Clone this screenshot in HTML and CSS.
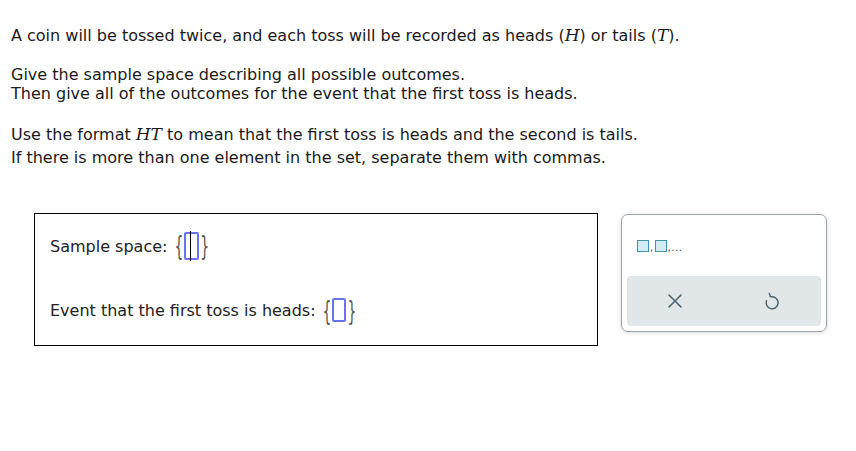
FILE: index.html
```html
<!DOCTYPE html>
<html>
<head>
<meta charset="utf-8">
<link rel="stylesheet" href="styles.css">
</head>
<body>
<div class="page">
  <p class="p1">A coin will be tossed twice, and each toss will be recorded as heads (<span class="m">H</span>) or tails (<span class="m">T</span>).</p>
  <p class="p2">Give the sample space describing all possible outcomes.<br>Then give all of the outcomes for the event that the first toss is heads.</p>
  <p class="p3"><span class="l1">Use the format <span class="m">HT</span> to mean that the first toss is heads and the second is tails.</span><br>If there is more than one element in the set, separate them with commas.</p>

  <div class="work">
    <div class="answer">
      <div class="row r1">
        <span>Sample space:</span>
        <span class="set"><span class="br">{</span><span class="slot active"><span class="caret"></span></span><span class="br">}</span></span>
      </div>
      <div class="row r2">
        <span>Event that the first toss is heads:</span>
        <span class="set"><span class="br">{</span><span class="slot"></span><span class="br">}</span></span>
      </div>
    </div>
    <div class="tools">
      <div class="tool-top">
        <span class="seq"><span class="sq"></span><span class="cm">,</span><span class="sq"></span><span class="cm">,...</span></span>
      </div>
      <div class="tool-bar">
        <svg class="ic" width="16" height="16" viewBox="0 0 16 16"><path d="M2 2 L14 14 M14 2 L2 14" stroke="#4c6470" stroke-width="1.6" fill="none" stroke-linecap="round"/></svg>
        <svg class="ic" width="18" height="20" viewBox="0 0 16 18"><path d="M5.6 2.2 L6.6 5.2 L8 5.2 A5.4 5.4 0 1 1 3 8.8" stroke="#4c6470" stroke-width="1.3" fill="none" stroke-linecap="round" stroke-linejoin="round"/></svg>
      </div>
    </div>
  </div>
</div>
</body>
</html>
```
FILE: styles.css
```css
html, body {
  margin: 0;
  padding: 0;
  background: #fff;
}
body {
  font-family: "DejaVu Sans", Verdana, sans-serif;
  font-size: 16px;
  color: #1a1a1a;
}
.page {
  padding: 26px 11px 0 11px;
}
p {
  margin: 0;
  line-height: 19px;
}
.p1 { margin-bottom: 20px; }
.p2 { margin-bottom: 20px; }
.p3 { line-height: 23px; }
.m {
  font-family: "DejaVu Serif", "Liberation Serif", serif;
  font-style: italic;
  font-size: 17px;
}
.work {
  display: flex;
  align-items: flex-start;
  margin-top: 44px;
  padding-left: 23px;
  gap: 23px;
}
.answer {
  width: 564px;
  height: 133px;
  border: 1px solid #000;
  padding: 0 15px;
  box-sizing: border-box;
  display: flex;
  flex-direction: column;
}
.row {
  display: flex;
  align-items: center;
  gap: 7px;
  color: #222;
}
.r1 { margin-top: 17px; height: 30px; }
.r2 { margin-top: 34px; height: 30px; }
.set {
  display: inline-flex;
  align-items: center;
  gap: 0;
}
.br {
  font-family: "DejaVu Sans", sans-serif;
  font-size: 14px;
  color: #555;
  transform: scaleY(1.9);
  line-height: 1;
  display: inline-block;
}
.slot {
  display: inline-block;
  width: 10px;
  height: 20px;
  border: 2px solid #6a72f0;
  border-radius: 2px;
  position: relative;
  margin: 0 1px;
}
.active { height: 24px; width: 11px; }
.caret {
  position: absolute;
  left: 4px;
  top: -3px;
  width: 1px;
  height: 30px;
  background: #000;
}
.tools {
  margin-top: 1px;
  border: 1px solid #9aa5ab;
  border-radius: 7px;
  box-shadow: 0 1px 4px rgba(0,0,0,0.15);
  display: flex;
  flex-direction: column;
  padding: 0 5px 5px 5px;
  box-sizing: border-box;
  width: 206px;
  height: 118px;
}
.tool-top {
  flex: 1;
  display: flex;
  align-items: center;
  padding-left: 10px;
  padding-top: 1px;
}
.seq {
  display: inline-flex;
  align-items: flex-end;
  font-size: 10px;
  color: #444;
}
.sq {
  display: inline-block;
  width: 10px;
  height: 10px;
  border: 1.5px solid #3f93ad;
  background: #d3ecf3;
}
.cm { line-height: 9px; margin: 0 1px; letter-spacing: 0.5px; }
.tool-bar {
  height: 50px;
  background: #e1e6e9;
  border-radius: 4px;
  display: flex;
  align-items: center;
  justify-content: space-around;
}
```
